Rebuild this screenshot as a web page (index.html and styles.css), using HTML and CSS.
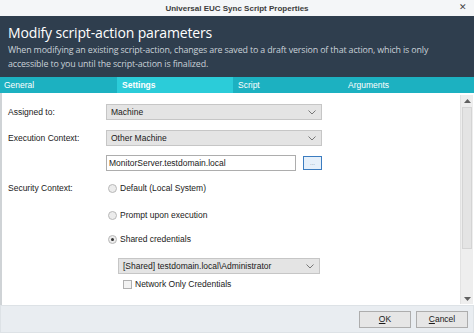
FILE: index.html
```html
<!DOCTYPE html>
<html>
<head>
<meta charset="utf-8">
<link rel="stylesheet" href="styles.css">
</head>
<body>
<div class="window">
  <div class="titlebar">
    <span class="title">Universal EUC Sync Script Properties</span>
    <span class="close">✕</span>
  </div>
  <div class="header">
    <div class="h-title">Modify script-action parameters</div>
    <div class="h-desc">When modifying an existing script-action, changes are saved to a draft version of that action, which is only accessible to you until the script-action is finalized.</div>
  </div>
  <div class="tabs">
    <div class="tab t1">General</div>
    <div class="tab t2 active">Settings</div>
    <div class="tab t3">Script</div>
    <div class="tab t4">Arguments</div>
  </div>
  <div class="content">
    <div class="form">
      <div class="row r1">
        <div class="label">Assigned to:</div>
        <div class="select wide"><span>Machine</span><svg class="chev" width="8" height="5" viewBox="0 0 8 5"><path d="M0.5 0.5 L4 4 L7.5 0.5" fill="none" stroke="#777" stroke-width="1"/></svg></div>
      </div>
      <div class="row r2">
        <div class="label">Execution Context:</div>
        <div class="select wide"><span>Other Machine</span><svg class="chev" width="8" height="5" viewBox="0 0 8 5"><path d="M0.5 0.5 L4 4 L7.5 0.5" fill="none" stroke="#777" stroke-width="1"/></svg></div>
      </div>
      <div class="row r3">
        <div class="label"></div>
        <div class="inputrow">
          <div class="input">MonitorServer.testdomain.local</div>
          <div class="dots">...</div>
        </div>
      </div>
      <div class="row r4">
        <div class="label">Security Context:</div>
        <div class="radio"><span class="rb"></span>Default (Local System)</div>
      </div>
      <div class="row r5">
        <div class="label"></div>
        <div class="radio"><span class="rb"></span>Prompt upon execution</div>
      </div>
      <div class="row r6">
        <div class="label"></div>
        <div class="radio"><span class="rb on"></span>Shared credentials</div>
      </div>
      <div class="row r7">
        <div class="label"></div>
        <div class="select cred"><span>[Shared] testdomain.local\Administrator</span><svg class="chev" width="8" height="5" viewBox="0 0 8 5"><path d="M0.5 0.5 L4 4 L7.5 0.5" fill="none" stroke="#777" stroke-width="1"/></svg></div>
      </div>
      <div class="row r8">
        <div class="label"></div>
        <div class="check"><span class="cb"></span>Network Only Credentials</div>
      </div>
    </div>
    <div class="scrollbar">
      <div class="arrow up"><svg width="7" height="4" viewBox="0 0 7 4"><path d="M0 4 L3.5 0 L7 4 Z" fill="#606060"/></svg></div>
      <div class="track"><div class="thumb"></div></div>
      <div class="arrow down"><svg width="7" height="4" viewBox="0 0 7 4"><path d="M0 0 L3.5 4 L7 0 Z" fill="#606060"/></svg></div>
    </div>
  </div>
  <div class="footer">
    <div class="btn"><u>O</u>K</div>
    <div class="btn"><u>C</u>ancel</div>
  </div>
</div>
</body>
</html>
```
FILE: styles.css
```css
html, body {
  margin: 0;
  padding: 0;
  background: #ffffff;
}
.window {
  width: 474px;
  height: 333px;
  display: flex;
  flex-direction: column;
  font-family: "Liberation Sans", Arial, sans-serif;
  font-size: 8.5px;
  color: #1a1a1a;
  overflow: hidden;
}
.titlebar {
  height: 16px;
  background: #f4f6f8;
  display: flex;
  align-items: center;
  justify-content: center;
  position: relative;
  flex: none;
}
.title {
  font-weight: bold;
  font-size: 8px;
  color: #3c3c3c;
}
.close {
  position: absolute;
  right: 7px;
  top: 2px;
  font-size: 9px;
  color: #444;
}
.header {
  height: 61px;
  background: #2f3e4e;
  padding: 9px 8px 0 8px;
  box-sizing: border-box;
  flex: none;
}
.h-title {
  font-family: "Open Sans", "Noto Sans", sans-serif;
  font-size: 14px;
  color: #ffffff;
  line-height: 16px;
  letter-spacing: -0.15px;
}
.h-desc {
  font-family: "Open Sans", "Noto Sans", sans-serif;
  font-size: 8.9px;
  color: #c9d1d8;
  line-height: 14px;
  margin-top: 2px;
  width: 432px;
  letter-spacing: -0.15px;
}
.tabs {
  height: 16px;
  background: #1cb1c1;
  display: flex;
  flex: none;
}
.tab {
  padding-left: 5px;
  box-sizing: border-box;
  color: #ffffff;
  font-size: 8.5px;
  line-height: 16px;
}
.t1 { width: 117px; padding-left: 4px; }
.t2 { width: 116px; }
.t3 { width: 110px; }
.t4 { flex: 1; }
.tab.active {
  background: #2bccd9;
  font-weight: bold;
}
.content {
  height: 212px;
  display: flex;
  background: #ffffff;
  border-left: 2px solid #cfd3d6;
  flex: none;
}
.form {
  flex: 1;
  padding: 11px 0 0 6px;
}
.row {
  display: grid;
  grid-template-columns: 98px auto;
  align-items: center;
  height: 16px;
}
.r2 { margin-top: 10px; }
.r3 { margin-top: 9px; }
.r4 { margin-top: 9px; }
.r5 { margin-top: 11px; }
.r6 { margin-top: 8px; }
.r7 { margin-top: 11px; padding-left: 12px; }
.r8 { margin-top: 4px; height: 12px; }
.label {
  color: #1a1a1a;
}
.select {
  height: 16px;
  box-sizing: border-box;
  background: #e4e4e4;
  border: 1px solid #c6c6c6;
  display: flex;
  align-items: center;
  justify-content: space-between;
  padding: 0 5px 0 4px;
}
.select.wide { width: 216px; }
.select.cred { width: 202px; }
.chev { display: block; }
.inputrow {
  display: flex;
  align-items: center;
  gap: 7px;
}
.input {
  width: 190px;
  height: 16px;
  box-sizing: border-box;
  border: 1px solid #adadad;
  background: #fff;
  padding-left: 2px;
  line-height: 14px;
}
.dots {
  width: 19px;
  height: 14px;
  box-sizing: border-box;
  border: 1px solid #3b7cc0;
  background: #e6f0fa;
  color: #6a7f99;
  font-size: 6px;
  text-align: center;
  line-height: 13px;
}
.radio, .check {
  display: flex;
  align-items: center;
}
.rb {
  width: 9px;
  height: 9px;
  border-radius: 50%;
  border: 1px solid #b8b8b8;
  background: #ececec;
  margin-right: 3px;
  margin-left: 2px;
  box-sizing: border-box;
  position: relative;
}
.rb.on::after {
  content: "";
  position: absolute;
  left: 2px;
  top: 2px;
  width: 3px;
  height: 3px;
  border-radius: 50%;
  background: #333;
}
.cb {
  width: 9px;
  height: 9px;
  border: 1px solid #b0b0b0;
  background: #f2f2f2;
  box-sizing: border-box;
  margin-left: 17px;
  margin-right: 3px;
}
.scrollbar {
  width: 12px;
  margin: 2px 1px 1px 0;
  background: #eeeeee;
  display: flex;
  flex-direction: column;
  border-left: 1px solid #e2e2e2;
}
.arrow {
  height: 11px;
  display: flex;
  align-items: center;
  justify-content: center;
  flex: none;
}
.track {
  flex: 1;
  padding-top: 1px;
}
.thumb {
  height: 142px;
  margin: 0 1px;
  background: #e4e4e4;
  border: 1px solid #d4d4d4;
  box-sizing: border-box;
}
.footer {
  height: 28px;
  background: #e9edf1;
  border: 1px solid #dde2e6;
  box-sizing: border-box;
  display: flex;
  justify-content: flex-end;
  align-items: center;
  gap: 5px;
  padding-right: 5px;
  flex: none;
}
.btn {
  width: 52px;
  height: 17px;
  box-sizing: border-box;
  border: 1px solid #adadad;
  background: #e6e6e6;
  text-align: center;
  line-height: 15px;
  font-size: 8.5px;
  color: #1a1a1a;
}
```
